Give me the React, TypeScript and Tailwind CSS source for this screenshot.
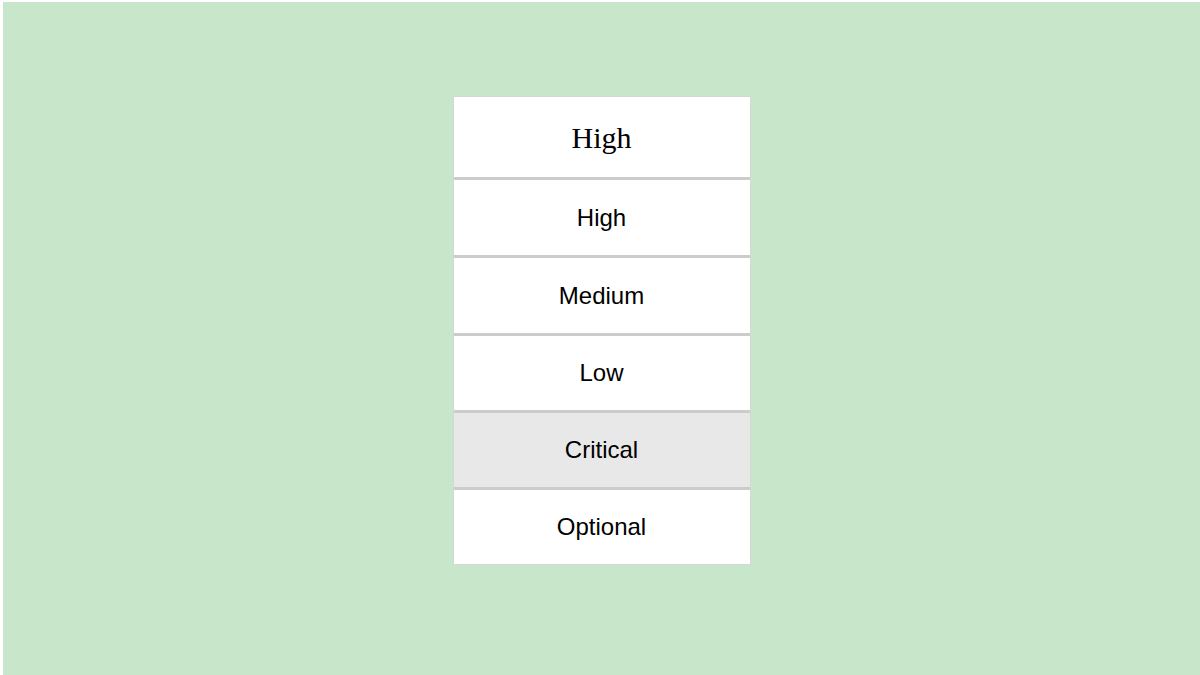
import React from 'react';

const levels = [
  { label: 'High', height: 'h-[78px]', bg: 'bg-white' },
  { label: 'Medium', height: 'h-[78px]', bg: 'bg-white' },
  { label: 'Low', height: 'h-[77px]', bg: 'bg-white' },
  { label: 'Critical', height: 'h-[77px]', bg: 'bg-[#e8e8e8]' },
  { label: 'Optional', height: 'h-[77px]', bg: 'bg-white' },
];

const App: React.FC = () => {
  return (
    <div className="w-[1200px] h-[675px] bg-white pl-[3px] pt-[2px] flex">
      <div className="flex-1 bg-[#c8e6c9] flex justify-center pt-[94px]">
        {/* Priority list */}
        <div className="w-[298px] h-fit border border-[#d6d6d6] flex flex-col text-black">
          <div
            className="h-[80px] bg-white flex items-center justify-center text-[30px]"
            style={{ fontFamily: '"Liberation Serif", "Times New Roman", serif' }}
          >
            High
          </div>
          {levels.map((level) => (
            <div
              key={level.label}
              className={`${level.height} ${level.bg} border-t-[3px] border-[#cccccc] flex items-center justify-center text-[24px]`}
              style={{ fontFamily: '"Liberation Sans", Arial, sans-serif' }}
            >
              {level.label}
            </div>
          ))}
        </div>
      </div>
    </div>
  );
};

export default App;
